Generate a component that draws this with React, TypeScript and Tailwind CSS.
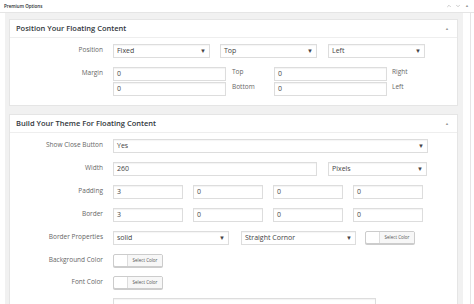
import React from "react";
import { ChevronUp, ChevronDown } from "lucide-react";

const font = { fontFamily: '"Open Sans", "Noto Sans", sans-serif' };

function Caret() {
  return <span className="text-[6px] leading-none text-[#444]">▼</span>;
}

function Select({ value, w }: { value: string; w: string }) {
  return (
    <div className={`${w} h-[14px] border border-[#dddddd] bg-white flex items-center justify-between px-[3px] shadow-[inset_0_1px_1px_rgba(0,0,0,0.04)]`}>
      <span className="text-[7px] text-[#444]">{value}</span>
      <Caret />
    </div>
  );
}

function Input({ value, w }: { value: string; w: string }) {
  return (
    <div className={`${w} h-[14px] border border-[#dddddd] bg-white flex items-center px-[3px] shadow-[inset_0_1px_1px_rgba(0,0,0,0.05)]`}>
      <span className="text-[7px] text-[#444]">{value}</span>
    </div>
  );
}

function ColorButton() {
  return (
    <div className="w-[50px] h-[13px] border border-[#cccccc] rounded-[2px] bg-white flex shadow-[0_1px_0_#ccc]">
      <div className="w-[14px] h-full border-r border-[#dddddd]" />
      <div className="flex-1 flex items-center justify-center text-[4.5px] text-[#555] bg-[#f7f7f7]">Select Color</div>
    </div>
  );
}

function Row({ label, children }: { label: string; children: React.ReactNode }) {
  return (
    <div className="flex items-start">
      <div className="w-[94px] text-right text-[6.5px] text-[#666] pt-[1px] pr-[1px]">{label}</div>
      <div className="ml-[9px] flex items-start">{children}</div>
    </div>
  );
}

function PanelHeader({ title }: { title: string }) {
  return (
    <div className="h-[18px] border-b border-[#eeeeee] flex items-center justify-between px-[6px]">
      <span className="text-[7.5px] font-semibold text-[#32373c]">{title}</span>
      <span className="text-[4px] text-[#999] mr-[2px]">▲</span>
    </div>
  );
}

export default function App() {
  return (
    <div className="w-[474px] h-[304px] overflow-hidden bg-white" style={font}>
      {/* Top bar */}
      <div className="h-[13px] border-b border-[#e5e5e5] flex items-center justify-between px-[4px]">
        <span className="text-[4.5px] font-semibold text-[#23282d]">Premium Options</span>
        <div className="flex items-center gap-[3px] text-[#999] mr-[1px]">
          <ChevronUp size={6} strokeWidth={2} />
          <ChevronDown size={6} strokeWidth={2} />
          <span className="text-[4px] ml-[1px]">▲</span>
        </div>
      </div>

      {/* Body */}
      <div className="pl-[5px] pr-[7px] border-r border-[#e5e5e5] mr-[3px]">
        <div className="bg-[#f1f1f1] pl-[4px] pr-[5px] pt-[6px] pb-[10px]">
          {/* Panel 1 */}
          <div className="bg-white border border-[#e5e5e5]">
            <PanelHeader title="Position Your Floating Content" />
            <div className="pt-[6px] pb-[9px] flex flex-col gap-[9px]">
              <Row label="Position">
                <Select value="Fixed" w="w-[97px]" />
                <div className="ml-[10px]"><Select value="Top" w="w-[97px]" /></div>
                <div className="ml-[11px]"><Select value="Left" w="w-[97px]" /></div>
              </Row>
              <Row label="Margin">
                <div className="flex flex-col gap-[1px]">
                  <div className="flex items-start">
                    <Input value="0" w="w-[113px]" />
                    <span className="w-[48px] pl-[6px] text-[6.5px] text-[#666]">Top</span>
                    <Input value="0" w="w-[113px]" />
                    <span className="pl-[5px] text-[6.5px] text-[#666]">Right</span>
                  </div>
                  <div className="flex items-start">
                    <Input value="0" w="w-[113px]" />
                    <span className="w-[48px] pl-[6px] text-[6.5px] text-[#666]">Bottom</span>
                    <Input value="0" w="w-[113px]" />
                    <span className="pl-[5px] text-[6.5px] text-[#666]">Left</span>
                  </div>
                </div>
              </Row>
            </div>
          </div>

          {/* Panel 2 */}
          <div className="mt-[8px] bg-white border border-[#e5e5e5]">
            <PanelHeader title="Build Your Theme For Floating Content" />
            <div className="pt-[6px] pb-[10px] flex flex-col gap-[9px]">
              <Row label="Show Close Button">
                <Select value="Yes" w="w-[315px]" />
              </Row>
              <Row label="Width">
                <Input value="260" w="w-[204px]" />
                <div className="ml-[11px]"><Select value="Pixels" w="w-[99px]" /></div>
              </Row>
              <Row label="Padding">
                <div className="flex gap-[10px]">
                  <Input value="3" w="w-[70px]" />
                  <Input value="0" w="w-[70px]" />
                  <Input value="0" w="w-[70px]" />
                  <Input value="0" w="w-[70px]" />
                </div>
              </Row>
              <Row label="Border">
                <div className="flex gap-[10px]">
                  <Input value="3" w="w-[70px]" />
                  <Input value="0" w="w-[70px]" />
                  <Input value="0" w="w-[70px]" />
                  <Input value="0" w="w-[70px]" />
                </div>
              </Row>
              <Row label="Border Properties">
                <Select value="solid" w="w-[116px]" />
                <div className="ml-[12px]"><Select value="Straight Cornor" w="w-[115px]" /></div>
                <div className="ml-[9px]"><ColorButton /></div>
              </Row>
              <Row label="Background Color">
                <ColorButton />
              </Row>
              <Row label="Font Color">
                <ColorButton />
              </Row>
              <Row label="">
                <Input value="" w="w-[263px]" />
              </Row>
            </div>
          </div>
        </div>
      </div>
    </div>
  );
}
